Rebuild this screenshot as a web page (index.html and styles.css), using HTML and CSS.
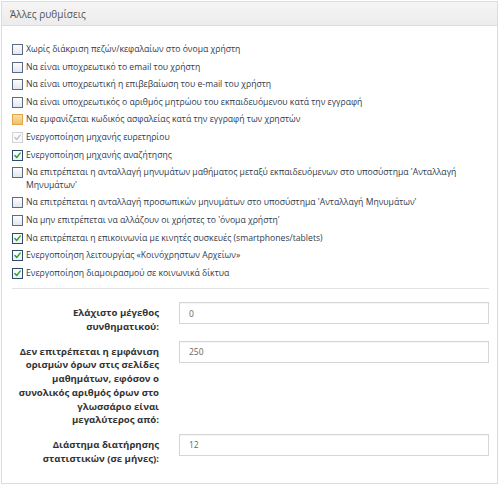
FILE: index.html
```html
<!DOCTYPE html>
<html lang="el">
<head>
<meta charset="utf-8">
<link rel="stylesheet" href="styles.css">
</head>
<body>
<div class="panel">
  <div class="panel-heading">Άλλες ρυθμίσεις</div>
  <div class="panel-body">
    <ul class="checks">
      <li><span class="cb"></span><span class="lbl">Χωρίς διάκριση πεζών/κεφαλαίων στο όνομα χρήστη</span></li>
      <li><span class="cb"></span><span class="lbl">Να είναι υποχρεωτικό το email του χρήστη</span></li>
      <li><span class="cb"></span><span class="lbl">Να είναι υποχρεωτική η επιβεβαίωση του e-mail του χρήστη</span></li>
      <li><span class="cb"></span><span class="lbl">Να είναι υποχρεωτικός ο αριθμός μητρώου του εκπαιδευόμενου κατά την εγγραφή</span></li>
      <li><span class="cb cb-focus"></span><span class="lbl">Να εμφανίζεται κωδικός ασφαλείας κατά την εγγραφή των χρηστών</span></li>
      <li><span class="cb cb-disabled"><svg viewBox="0 0 11 11"><path d="M2.3 5.6 L4.5 8 L8.8 2.6"/></svg></span><span class="lbl">Ενεργοποίηση μηχανής ευρετηρίου</span></li>
      <li><span class="cb cb-checked"><svg viewBox="0 0 11 11"><path d="M2.3 5.6 L4.5 8 L8.8 2.6"/></svg></span><span class="lbl">Ενεργοποίηση μηχανής αναζήτησης</span></li>
      <li><span class="cb"></span><span class="lbl">Να επιτρέπεται η ανταλλαγή μηνυμάτων μαθήματος μεταξύ εκπαιδευόμενων στο υποσύστημα 'Ανταλλαγή Μηνυμάτων'</span></li>
      <li><span class="cb"></span><span class="lbl">Να επιτρέπεται η ανταλλαγή προσωπικών μηνυμάτων στο υποσύστημα 'Ανταλλαγή Μηνυμάτων'</span></li>
      <li><span class="cb"></span><span class="lbl">Να μην επιτρέπεται να αλλάζουν οι χρήστες το 'όνομα χρήστη'</span></li>
      <li><span class="cb cb-checked"><svg viewBox="0 0 11 11"><path d="M2.3 5.6 L4.5 8 L8.8 2.6"/></svg></span><span class="lbl">Να επιτρέπεται η επικοινωνία με κινητές συσκευές (smartphones/tablets)</span></li>
      <li><span class="cb cb-checked"><svg viewBox="0 0 11 11"><path d="M2.3 5.6 L4.5 8 L8.8 2.6"/></svg></span><span class="lbl">Ενεργοποίηση λειτουργίας «Κοινόχρηστων Αρχείων»</span></li>
      <li><span class="cb cb-checked"><svg viewBox="0 0 11 11"><path d="M2.3 5.6 L4.5 8 L8.8 2.6"/></svg></span><span class="lbl">Ενεργοποίηση διαμοιρασμού σε κοινωνικά δίκτυα</span></li>
    </ul>
    <div class="divider"></div>
    <div class="form">
      <label class="flabel">Ελάχιστο μέγεθος<br>συνθηματικού:</label>
      <div class="field"><input class="input" type="text" value="0"></div>
      <label class="flabel">Δεν επιτρέπεται η εμφάνιση<br>ορισμών όρων στις σελίδες<br>μαθημάτων, εφόσον ο<br>συνολικός αριθμός όρων στο<br>γλωσσάριο είναι<br>μεγαλύτερος από:</label>
      <div class="field"><input class="input" type="text" value="250"></div>
      <label class="flabel">Διάστημα διατήρησης<br>στατιστικών (σε μήνες):</label>
      <div class="field"><input class="input" type="text" value="12"></div>
    </div>
  </div>
</div>
</body>
</html>
```
FILE: styles.css
```css
html, body {
  margin: 0;
  padding: 0;
  background: #fff;
}
body {
  font-family: "Open Sans", "Noto Sans", sans-serif;
  color: #333;
}
.panel {
  margin: 1px 2px 0 1px;
  height: 483px;
  box-sizing: border-box;
  border: 1px solid #dcdcdc;
  background: #fff;
  box-shadow: 0 1px 1px rgba(0,0,0,0.05);
}
.panel-heading {
  height: 24px;
  box-sizing: border-box;
  padding: 0 8px;
  display: flex;
  align-items: center;
  font-size: 10px;
  color: #555;
  background: linear-gradient(#f5f5f5, #ececec);
  border-bottom: 1px solid #dcdcdc;
}
.panel-body {
  padding: 17px 8px 0 10px;
}
.checks {
  list-style: none;
  margin: 0;
  padding: 0;
  display: flex;
  flex-direction: column;
  gap: 5px;
}
.checks li {
  display: flex;
  align-items: flex-start;
  gap: 3px;
  font-size: 8.65px;
  line-height: 12.6px;
  color: #2f3a4d;
}
.cb {
  flex: none;
  width: 11px;
  height: 11px;
  box-sizing: border-box;
  margin-top: 1px;
  border: 1px solid #5c6b85;
  background: linear-gradient(#fcfcfd, #e3e7ee);
  display: flex;
  align-items: center;
  justify-content: center;
}
.cb svg {
  width: 11px;
  height: 11px;
  fill: none;
  stroke-width: 1.8;
  stroke-linecap: round;
  stroke-linejoin: round;
}
.cb-checked {
  border-color: #2e4a6e;
  background: linear-gradient(#ffffff, #eef1f5);
}
.cb-checked svg {
  stroke: #2ea336;
}
.cb-disabled {
  border-color: #d0d3d8;
  background: #fafafa;
}
.cb-disabled svg {
  stroke: #c4c6ca;
}
.cb-focus {
  border-color: #e2a54a;
  background: linear-gradient(#fbe1a8, #f3bf68);
}
.divider {
  height: 1px;
  background: #e2e2e2;
  margin: 9px 0 13px 0;
}
.form {
  display: grid;
  grid-template-columns: 147px 1fr;
  column-gap: 20px;
  row-gap: 7px;
}
.flabel {
  text-align: right;
  font-weight: bold;
  font-size: 9.6px;
  line-height: 13.7px;
  color: #333;
  padding-top: 4px;
  white-space: nowrap;
}
.field {
  display: flex;
  align-items: flex-start;
}
.input {
  width: 100%;
  height: 22px;
  box-sizing: border-box;
  margin: 0;
  border: 1px solid #d6d6d6;
  border-radius: 0;
  padding: 0 9px;
  font-family: "Open Sans", "Noto Sans", sans-serif;
  font-size: 8.5px;
  color: #666;
  background: #fff;
  box-shadow: inset 0 1px 1px rgba(0,0,0,0.04);
}
```
